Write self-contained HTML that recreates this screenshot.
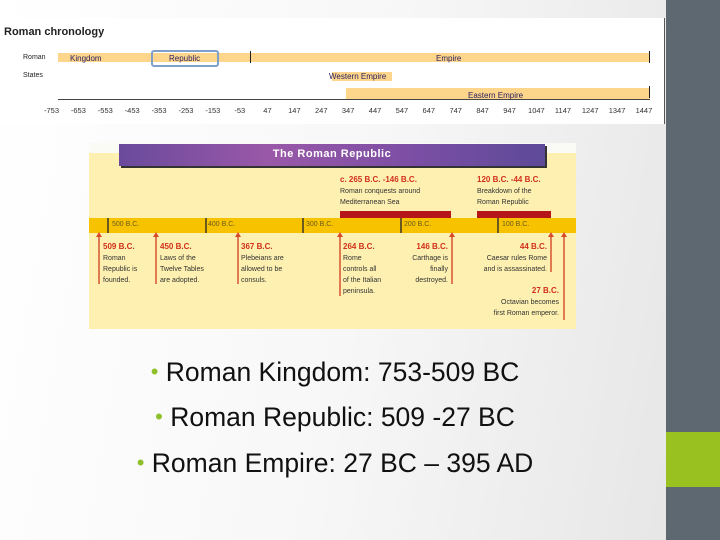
<!DOCTYPE html>
<html><head><meta charset="utf-8"><style>
*{margin:0;padding:0;box-sizing:border-box}
body{width:720px;height:540px;overflow:hidden;position:relative;font-family:"Liberation Sans",sans-serif;background:linear-gradient(100deg,#ffffff 0%,#f7f7f7 50%,#e4e4e4 100%)}
.a{position:absolute}
.t{position:absolute;font-size:8px;color:#222;white-space:nowrap}
.r{color:#d1301c;font-weight:bold;font-size:8px}
.s{position:absolute;font-size:7px;color:#333;line-height:11px;white-space:nowrap}
.ar{position:absolute;width:2px;background:#e07a50}
.ar:before{content:"";position:absolute;top:-4px;left:-2px;border-left:3px solid transparent;border-right:3px solid transparent;border-bottom:5px solid #d94a2a}
.b{position:absolute;left:0;width:670px;text-align:center;font-size:26.5px;color:#111;font-family:"Liberation Sans",sans-serif}
.b span{color:#8dc02a;font-size:22px;vertical-align:2px}
</style></head><body>
<div class="a" style="left:666px;top:0;width:54px;height:540px;background:#5e6870"></div>
<div class="a" style="left:666px;top:432px;width:54px;height:55px;background:#99c221"></div>
<div class="a" style="left:0;top:18px;width:665px;height:106px;background:#fff;border-right:1px solid #555"></div>
<div class="a" style="left:4px;top:26px;font-size:11px;font-weight:bold;color:#222">Roman chronology</div>
<div class="t" style="left:23px;top:54px;font-size:7px">Roman</div>
<div class="t" style="left:23px;top:72px;font-size:7px">States</div>
<div class="a" style="left:58px;top:53px;width:592px;height:9px;background:#fdd68c"></div>
<div class="a" style="left:250px;top:51px;width:1px;height:12px;background:#222"></div>
<div class="a" style="left:649px;top:51px;width:1px;height:12px;background:#222"></div>
<div class="a" style="left:151px;top:50px;width:68px;height:17px;border:2px solid #7fa0c8;border-radius:3px"></div>
<div class="t" style="left:70px;top:54px;font-size:8px;color:#2a2060">Kingdom</div>
<div class="t" style="left:169px;top:54px;font-size:8px;color:#2a2060">Republic</div>
<div class="t" style="left:436px;top:54px;font-size:8px;color:#2a2060">Empire</div>
<div class="a" style="left:332px;top:72px;width:60px;height:9px;background:#fdd68c"></div>
<div class="t" style="left:329px;top:72px;font-size:8px;color:#2a2060">Western Empire</div>
<div class="a" style="left:346px;top:88px;width:304px;height:11px;background:#fdd68c"></div>
<div class="a" style="left:649px;top:86px;width:1px;height:12px;background:#222"></div>
<div class="t" style="left:468px;top:91px;font-size:8px;color:#2a2060">Eastern Empire</div>
<div class="a" style="left:58px;top:99px;width:592px;height:1px;background:#444"></div>
<div class="t" style="left:44px;top:106px;font-size:7.5px;color:#333;word-spacing:0">
<span style="display:inline-block;width:26.9px">-753</span><span style="display:inline-block;width:26.9px">-653</span><span style="display:inline-block;width:26.9px">-553</span><span style="display:inline-block;width:26.9px">-453</span><span style="display:inline-block;width:26.9px">-353</span><span style="display:inline-block;width:26.9px">-253</span><span style="display:inline-block;width:26.9px">-153</span><span style="display:inline-block;width:26.9px">&nbsp;-53</span><span style="display:inline-block;width:26.9px">&nbsp;&nbsp;47</span><span style="display:inline-block;width:26.9px">&nbsp;147</span><span style="display:inline-block;width:26.9px">&nbsp;247</span><span style="display:inline-block;width:26.9px">&nbsp;347</span><span style="display:inline-block;width:26.9px">&nbsp;447</span><span style="display:inline-block;width:26.9px">&nbsp;547</span><span style="display:inline-block;width:26.9px">&nbsp;647</span><span style="display:inline-block;width:26.9px">&nbsp;747</span><span style="display:inline-block;width:26.9px">&nbsp;847</span><span style="display:inline-block;width:26.9px">&nbsp;947</span><span style="display:inline-block;width:26.9px">1047</span><span style="display:inline-block;width:26.9px">1147</span><span style="display:inline-block;width:26.9px">1247</span><span style="display:inline-block;width:26.9px">1347</span><span>1447</span></div>
<div class="a" style="left:89px;top:143px;width:487px;height:186px;background:#fdf0b0"></div>
<div class="a" style="left:89px;top:143px;width:487px;height:10px;background:#fbfbf6"></div>
<div class="a" style="left:119px;top:144px;width:426px;height:22px;background:linear-gradient(90deg,#6a4a9c,#9a58a8 35%,#7a4ea4 70%,#5e4a98);box-shadow:2px 2px 0 #333;color:#fff;font-weight:bold;font-size:11px;text-align:center;line-height:20px;letter-spacing:0.5px">The Roman Republic</div>
<div class="a" style="left:89px;top:218px;width:487px;height:15px;background:#f7c300"></div>
<div class="a" style="left:340px;top:211px;width:111px;height:7px;background:#b5161a"></div>
<div class="a" style="left:477px;top:211px;width:74px;height:7px;background:#b5161a"></div>
<div class="a" style="left:107px;top:218px;width:2px;height:15px;background:#6a5a20"></div><div class="t" style="left:112px;top:221px;font-size:7px;color:#6a5a20">500 B.C.</div>
<div class="a" style="left:205px;top:218px;width:2px;height:15px;background:#6a5a20"></div><div class="t" style="left:208px;top:221px;font-size:7px;color:#6a5a20">400 B.C.</div>
<div class="a" style="left:302px;top:218px;width:2px;height:15px;background:#6a5a20"></div><div class="t" style="left:306px;top:221px;font-size:7px;color:#6a5a20">300 B.C.</div>
<div class="a" style="left:400px;top:218px;width:2px;height:15px;background:#6a5a20"></div><div class="t" style="left:404px;top:221px;font-size:7px;color:#6a5a20">200 B.C.</div>
<div class="a" style="left:497px;top:218px;width:2px;height:15px;background:#6a5a20"></div><div class="t" style="left:502px;top:221px;font-size:7px;color:#6a5a20">100 B.C.</div>
<div class="s" style="left:340px;top:174px"><span class="r">c. 265 B.C. -146 B.C.</span><br>Roman conquests around<br>Mediterranean Sea</div>
<div class="s" style="left:477px;top:174px"><span class="r">120 B.C. -44 B.C.</span><br>Breakdown of the<br>Roman Republic</div>
<div class="ar" style="left:98px;top:236px;height:48px"></div>
<div class="ar" style="left:155px;top:236px;height:48px"></div>
<div class="ar" style="left:237px;top:236px;height:48px"></div>
<div class="ar" style="left:339px;top:236px;height:60px"></div>
<div class="ar" style="left:451px;top:236px;height:48px"></div>
<div class="ar" style="left:550px;top:236px;height:36px"></div>
<div class="ar" style="left:563px;top:236px;height:84px"></div>
<div class="s" style="left:103px;top:241px"><span class="r">509 B.C.</span><br>Roman<br>Republic is<br>founded.</div>
<div class="s" style="left:160px;top:241px"><span class="r">450 B.C.</span><br>Laws of the<br>Twelve Tables<br>are adopted.</div>
<div class="s" style="left:241px;top:241px"><span class="r">367 B.C.</span><br>Plebeians are<br>allowed to be<br>consuls.</div>
<div class="s" style="left:343px;top:241px"><span class="r">264 B.C.</span><br>Rome<br>controls all<br>of the Italian<br>peninsula.</div>
<div class="s" style="left:404px;top:241px;text-align:right;width:44px"><span class="r">146 B.C.</span><br>Carthage is<br>finally<br>destroyed.</div>
<div class="s" style="left:470px;top:241px;text-align:right;width:77px"><span class="r">44 B.C.</span><br>Caesar rules Rome<br>and is assassinated.</div>
<div class="s" style="left:470px;top:285px;text-align:right;width:89px"><span class="r">27 B.C.</span><br>Octavian becomes<br>first Roman emperor.</div>
<div class="b" style="top:357px"><span>•</span> Roman Kingdom: 753-509 BC</div>
<div class="b" style="top:402px"><span>•</span> Roman Republic: 509 -27 BC</div>
<div class="b" style="top:448px"><span>•</span> Roman Empire: 27 BC – 395 AD</div>
</body></html>
